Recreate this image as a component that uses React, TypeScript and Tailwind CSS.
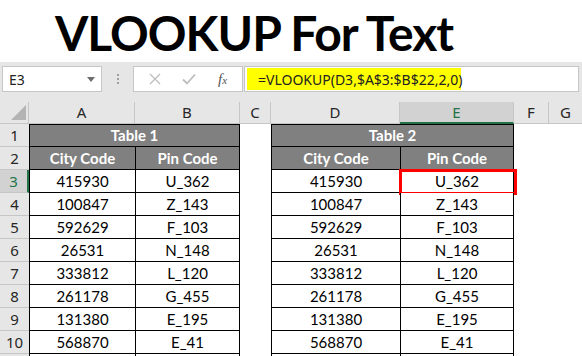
import React from "react";

const data: [string, string][] = [
  ["415930", "U_362"],
  ["100847", "Z_143"],
  ["592629", "F_103"],
  ["26531", "N_148"],
  ["333812", "L_120"],
  ["261178", "G_455"],
  ["131380", "E_195"],
  ["568870", "E_41"],
];

const uiFont = "font-['Noto_Sans','Open_Sans',sans-serif]";
const cellFont = "font-['Lato','Liberation_Sans',sans-serif]";

function RowHeader({ n, active }: { n?: number; active?: boolean }) {
  return (
    <div
      className={`w-[29px] shrink-0 box-border flex items-center justify-center border-b border-[#c6c6c6] text-[15px] ${uiFont} ${
        active
          ? "bg-[#d2d2d2] text-[#217346] border-r-2 border-r-[#217346]"
          : "bg-[#e6e6e6] text-[#262626]"
      }`}
    >
      {n}
    </div>
  );
}

function Cell({
  children,
  w,
  head,
  right,
  top,
  className = "",
}: {
  children?: React.ReactNode;
  w: string;
  head?: boolean;
  right?: boolean;
  top?: boolean;
  className?: string;
}) {
  return (
    <div
      className={`${w} shrink-0 box-border flex items-center justify-center border-l border-b border-black text-[15px] ${cellFont} ${
        right ? "border-r" : ""
      } ${top ? "border-t" : ""} ${
        head ? "bg-[#808080] text-white font-bold" : "bg-white text-black"
      } ${className}`}
    >
      {children}
    </div>
  );
}

export default function App() {
  return (
    <div className="w-[582px] h-[356px] overflow-hidden bg-white">
      {/* title */}
      <div className="h-[62px] flex items-center pl-[55px] pt-[3px]">
        <h1 className="text-[48px] leading-none font-bold tracking-[-1px] text-black font-['Lato','Liberation_Sans',sans-serif]">
          VLOOKUP For Text
        </h1>
      </div>

      {/* formula bar */}
      <div className="h-[40px] bg-[#e6e6e6] flex items-start pt-[4px] pl-[2px] pr-[3px]">
        <div className={`w-[100px] h-[26px] bg-white border border-[#c6c6c6] flex items-center justify-between pl-[6px] pr-[6px] text-[14px] text-[#222] ${uiFont}`}>
          <span>E3</span>
          <span className="w-0 h-0 border-l-[4px] border-r-[4px] border-t-[5px] border-l-transparent border-r-transparent border-t-[#6d6d6d]" />
        </div>
        <div className="w-[31px] h-[26px] flex items-center justify-center">
          <div className="flex flex-col gap-[2px]">
            <span className="w-[2px] h-[2px] bg-[#a0a0a0]" />
            <span className="w-[2px] h-[2px] bg-[#a0a0a0]" />
            <span className="w-[2px] h-[2px] bg-[#a0a0a0]" />
          </div>
        </div>
        <div className="w-[110px] h-[26px] bg-white border border-[#c6c6c6] flex items-center justify-around px-[4px]">
          <svg width="12" height="12" viewBox="0 0 12 12" fill="none" stroke="#bdbdbd" strokeWidth="1.3">
            <path d="M1 1l10 10M11 1L1 11" />
          </svg>
          <svg width="14" height="12" viewBox="0 0 14 12" fill="none" stroke="#bdbdbd" strokeWidth="1.8">
            <path d="M1 6.5l4 4L13 1.5" />
          </svg>
          <span className="text-[15px] italic text-[#555] font-['Liberation_Serif',serif] leading-none">
            f<span className="text-[11px]">x</span>
          </span>
        </div>
        <div className="flex-1 h-[26px] bg-white border border-[#c6c6c6] ml-[1px] flex items-stretch pl-[2px] py-[1px]">
          <div className={`w-[214px] bg-[#ffff00] flex items-center pl-[11px] text-[14px] text-[#222] ${uiFont}`}>
            =VLOOKUP(D3,$A$3:$B$22,2,0)
          </div>
        </div>
      </div>

      {/* column headers */}
      <div className={`h-[22px] flex bg-[#e6e6e6] text-[15px] text-[#262626] ${uiFont}`}>
        <div className="w-[29px] shrink-0 border-r border-b border-[#c6c6c6] flex items-end justify-end pr-[2px] pb-[3px]">
          <svg width="15" height="15" viewBox="0 0 15 15">
            <path d="M15 0L15 15L0 15Z" fill="#b4b4b4" />
          </svg>
        </div>
        <div className="w-[106px] shrink-0 box-border border-r border-b border-[#c6c6c6] flex items-center justify-center">A</div>
        <div className="w-[105px] shrink-0 box-border border-r border-b border-[#c6c6c6] flex items-center justify-center">B</div>
        <div className="w-[31px] shrink-0 box-border border-r border-b border-[#c6c6c6] flex items-center justify-center">C</div>
        <div className="w-[129px] shrink-0 box-border border-r border-b border-[#c6c6c6] flex items-center justify-center">D</div>
        <div className="w-[114px] shrink-0 box-border border-r border-[#c6c6c6] border-b-2 border-b-[#217346] bg-[#d2d2d2] text-[#217346] flex items-center justify-center">E</div>
        <div className="w-[35px] shrink-0 box-border border-r border-b border-[#c6c6c6] flex items-center justify-center">F</div>
        <div className="flex-1 border-b border-[#c6c6c6] flex items-center justify-center">G</div>
      </div>

      {/* row 1 */}
      <div className="h-[23px] flex">
        <RowHeader n={1} />
        <Cell w="w-[211px]" head right top>Table 1</Cell>
        <div className="w-[31px] shrink-0" />
        <Cell w="w-[243px]" head right top>Table 2</Cell>
      </div>

      {/* row 2 */}
      <div className="h-[23px] flex">
        <RowHeader n={2} />
        <Cell w="w-[106px]" head>City Code</Cell>
        <Cell w="w-[105px]" head right>Pin Code</Cell>
        <div className="w-[31px] shrink-0" />
        <Cell w="w-[129px]" head>City Code</Cell>
        <Cell w="w-[114px]" head right>Pin Code</Cell>
      </div>

      {data.map(([city, pin], i) => (
        <div key={city} className="h-[23px] flex">
          <RowHeader n={i + 3} active={i === 0} />
          <Cell w="w-[106px]">{city}</Cell>
          <Cell w="w-[105px]" right>{pin}</Cell>
          <div className="w-[31px] shrink-0" />
          <Cell w="w-[129px]">{city}</Cell>
          <Cell w="w-[114px]" right className="relative">
            {pin}
            {i === 0 && (
              <div className="absolute left-[-2px] top-[-1px] w-[118px] h-[26px] border-[3px] border-[#ff0000]" />
            )}
          </Cell>
        </div>
      ))}

      {/* row 11, only its top edge is in view */}
      <div className="h-[23px] flex">
        <RowHeader />
        <Cell w="w-[106px]" />
        <Cell w="w-[105px]" right />
        <div className="w-[31px] shrink-0" />
        <Cell w="w-[129px]" />
        <Cell w="w-[114px]" right />
      </div>
    </div>
  );
}
